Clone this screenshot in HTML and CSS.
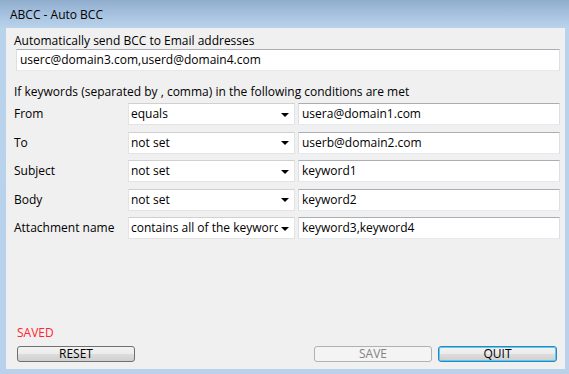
FILE: index.html
```html
<!DOCTYPE html>
<html>
<head>
<meta charset="utf-8">
<link rel="stylesheet" href="styles.css">
</head>
<body>
<div class="window">
  <div class="titlebar">ABCC - Auto BCC</div>
  <div class="client">
    <div class="label-top">Automatically send BCC to Email addresses</div>
    <div class="textbox wide">userc@domain3.com,userd@domain4.com</div>
    <div class="label-cond">If keywords (separated by , comma) in the following conditions are met</div>
    <div class="grid">
      <div class="rlabel">From</div>
      <div class="combo"><span class="ctext">equals</span><span class="arrow"></span></div>
      <div class="textbox">usera@domain1.com</div>

      <div class="rlabel">To</div>
      <div class="combo"><span class="ctext">not set</span><span class="arrow"></span></div>
      <div class="textbox">userb@domain2.com</div>

      <div class="rlabel">Subject</div>
      <div class="combo"><span class="ctext">not set</span><span class="arrow"></span></div>
      <div class="textbox">keyword1</div>

      <div class="rlabel">Body</div>
      <div class="combo"><span class="ctext">not set</span><span class="arrow"></span></div>
      <div class="textbox">keyword2</div>

      <div class="rlabel">Attachment name</div>
      <div class="combo"><span class="ctext">contains all of the keywords</span><span class="arrow"></span></div>
      <div class="textbox">keyword3,keyword4</div>
    </div>
    <div class="bottom">
      <div class="status">SAVED</div>
      <div class="buttons">
        <div class="btn">RESET</div>
        <div class="spacer"></div>
        <div class="btn disabled">SAVE</div>
        <div class="btn focused">QUIT</div>
      </div>
    </div>
  </div>
</div>
</body>
</html>
```
FILE: styles.css
```css
html, body {
  margin: 0;
  padding: 0;
}
body {
  width: 569px;
  height: 374px;
  overflow: hidden;
  font-family: "Open Sans", "Noto Sans", sans-serif;
  font-size: 12px;
  color: #000;
}
.window {
  width: 569px;
  height: 374px;
  display: flex;
  flex-direction: column;
  background: linear-gradient(to bottom, #8fadcc 0px, #a6c1df 14px, #b9d3ec 28px, #b9d1ea 100%);
}
.titlebar {
  height: 28px;
  flex: none;
  box-sizing: border-box;
  padding: 6px 0 0 10px;
  line-height: 17px;
  color: #000;
}
.client {
  flex: 1;
  margin: 0 4px 5px 6px;
  background: #f0f0f0;
  display: flex;
  flex-direction: column;
  padding: 0 5px 0 8px;
}
.label-top {
  margin-top: 5px;
  line-height: 16px;
  height: 16px;
}
.textbox {
  box-sizing: border-box;
  height: 22px;
  background: #fff;
  border: 1px solid #e2e3ea;
  border-top-color: #abadb3;
  border-left-color: #dbdfe6;
  border-right-color: #dbdfe6;
  border-bottom-color: #e3e9ef;
  padding: 0 3px;
  line-height: 20px;
  white-space: nowrap;
  overflow: hidden;
}
.wide {
  margin: 0 0 0 2px;
}
.label-cond {
  margin-top: 13px;
  line-height: 16px;
  height: 16px;
}
.grid {
  margin-top: 3px;
  display: grid;
  grid-template-columns: 114px 164px 1fr;
  column-gap: 3px;
  row-gap: 6.5px;
  grid-auto-rows: 22px;
}
.rlabel {
  line-height: 22px;
  white-space: nowrap;
}
.combo {
  box-sizing: border-box;
  height: 22px;
  margin-left: -3px;
  background: #fff;
  border: 1px solid #e3e3e3;
  border-top-color: #d0d0d0;
  display: flex;
  align-items: center;
  padding-left: 2px;
  overflow: hidden;
}
.ctext {
  flex: 1;
  min-width: 0;
  white-space: nowrap;
  overflow: hidden;
  text-overflow: clip;
  line-height: 20px;
}
.arrow {
  flex: none;
  width: 0;
  height: 0;
  border-left: 4px solid transparent;
  border-right: 4px solid transparent;
  border-top: 4px solid #000;
  margin: 1px 5px 0 3px;
}
.bottom {
  margin-top: auto;
  padding-bottom: 7px;
}
.status {
  color: #ff2430;
  line-height: 16px;
  margin-bottom: 5px;
  margin-left: 3px;
}
.buttons {
  display: flex;
  margin-left: 3px;
  margin-right: 3px;
}
.spacer {
  flex: 1;
}
.btn {
  box-sizing: border-box;
  width: 118px;
  height: 16px;
  border: 1px solid #707070;
  border-radius: 3px;
  background: linear-gradient(to bottom, #f2f2f2 0%, #ebebeb 50%, #dddddd 51%, #cfcfcf 100%);
  text-align: center;
  line-height: 14px;
  font-size: 12px;
}
.btn.disabled {
  border-color: #adb2b5;
  background: #f4f4f4;
  color: #838383;
  margin-right: 6px;
}
.btn.focused {
  width: 119px;
  border-color: #3c7fb1;
  box-shadow: inset 0 0 0 1px #48d2fc;
}
```
